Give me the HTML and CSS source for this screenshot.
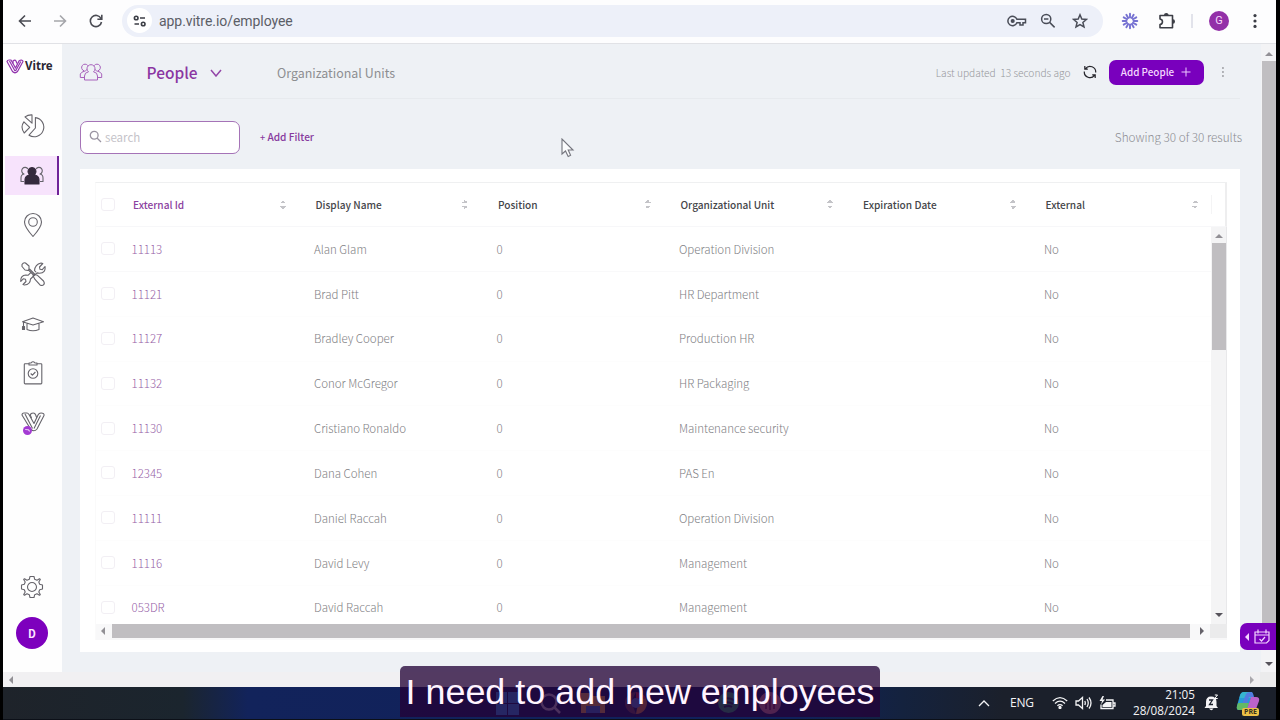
FILE: index.html
```html
<!DOCTYPE html>
<html lang="en">
<head>
<meta charset="utf-8">
<title>Vitre - People</title>
<link rel="stylesheet" href="styles.css">
</head>
<body>
<div class="screen">
  <header class="browser">
    <svg class="nav-icon back" width="14" height="14" viewBox="0 0 14 14"><path d="M13 7H2M7 1.5 1.5 7 7 12.5"/></svg>
    <svg class="nav-icon forward" width="14" height="14" viewBox="0 0 14 14"><path d="M1 7h11M7 1.5 12.500 7 7 12.500"/></svg>
    <svg class="nav-icon reload" width="14" height="14" viewBox="0 0 14 14"><path d="M12 4.500A5.600 5.600 0 1 0 12.500 8M12.800 .8v4.400H8.400"/></svg>
    <div class="address">
      <span class="site-info"><svg width="14" height="12" viewBox="0 0 14 12"><g fill="none" stroke="#3c3e46" stroke-width="1.600"><circle cx="3.200" cy="3" r="1.800"/><path d="M7 3h5M1.500 9H6"/><circle cx="10.200" cy="9" r="1.800"/></g></svg></span>
      <span class="url">app.vitre.io/employee</span>
      <span class="address-tools">
        <svg width="20" height="12" viewBox="0 0 20 12" fill="none" stroke="#4a4d58" stroke-width="1.500"><path d="M9.900 4.200A4.700 4.700 0 1 0 9.900 7.800H13V9.900H16V7.800H18.500V4.200Z"/><circle cx="5.700" cy="6" r="1.300" fill="#4a4d58"/></svg>
        <svg width="16" height="16" viewBox="0 0 16 16" fill="none" stroke="#4a4d58" stroke-width="1.500"><circle cx="6.200" cy="6" r="4.600"/><path d="M9.600 9.400 14.600 14.400M4 6h4.400"/></svg>
        <svg width="16" height="16" viewBox="0 0 16 16" fill="none" stroke="#4a4d58" stroke-width="1.500"><path d="M8 1.800 9.800 6l4.600.4-3.500 3 1.100 4.500L8 11.500 4 13.900l1.100-4.500-3.500-3L6.200 6Z"/></svg>
      </span>
    </div>
    <svg class="burst" width="18" height="18" viewBox="-9 -9 18 18" stroke="#7672d2" stroke-width="1.900" stroke-linecap="round"><path d="M0-3.500V-7.300M0 3.500V7.300M3.500 0H7.300M-3.500 0H-7.300M1.750-3 3.650-6.300M3-1.750 6.300-3.650M3 1.750 6.300 3.650M1.750 3 3.650 6.300M-1.750 3-3.650 6.300M-3 1.750-6.300 3.650M-3-1.750-6.300-3.650M-1.750-3-3.650-6.300"/></svg>
    <svg class="puzzle" width="18" height="18" viewBox="0 0 18 18" fill="none" stroke="#3c3e46" stroke-width="1.600" stroke-linejoin="round"><path d="M2 3.500H14.500V15.800H2V12.500C5.300 12 5.300 7.500 2 7Z"/><path d="M6.800 2.900a1.500 1.200 0 0 1 3 0ZM15 8a1.200 1.500 0 0 1 0 3Z" fill="#3c3e46"/></svg>
    <span class="divider"></span>
    <span class="profile">G</span>
    <svg class="more" width="4" height="16" viewBox="0 0 4 16" fill="#3c3e46"><circle cx="2" cy="2.600" r="1.600"/><circle cx="2" cy="8" r="1.600"/><circle cx="2" cy="13.400" r="1.600"/></svg>
  </header>

  <div class="app">
    <nav class="sidebar">
      <div class="brand">
        <svg width="18" height="15" viewBox="0 0 18 15" fill="none" stroke="#9132ad" stroke-width="1.200" stroke-linejoin="round"><path d="M1 2.500Q1.500 1 3 1h2L9.500 9 13 2Q14 1 15.500 1 17 1.300 17 2.500L11.500 12.500Q9 15 6.500 12.500Z"/><path d="M3.500 2 9 12M7 4.500V2q2-1.800 3 0l1 2.500M14.800 2.500 9.500 12"/></svg>
        <span>Vitre</span>
      </div>
      <a class="item"><svg width="24" height="24" viewBox="0 0 24 24"><path d="M14.400 3.600A9.600 9.600 0 1 1 8 21.200L14.400 14ZM11 9.200 4 2.900Q7 .7 11 .9ZM8.700 13.300 3.200 19Q-1 13 2.900 7.800Z"/></svg></a>
      <a class="item active"><svg width="26" height="22" viewBox="0 0 26 22"><path d="M5 16.500H2V13Q2 9.500 5 9A3.400 3.400 0 1 1 9 4M21 16.500h3V13Q24 9.500 21 9A3.400 3.400 0 1 0 17 4"/><path class="solid" d="M13 2.500a4 4 0 0 1 3 6.700v1q4 .7 4 4.500V19H6v-4.300Q6 10.900 10 10.200v-1A4 4 0 0 1 13 2.500Z"/></svg></a>
      <a class="item"><svg width="24" height="26" viewBox="0 0 24 26"><path d="M12 24.500Q3.500 15 3.500 10A8.500 8.500 0 0 1 20.500 10Q20.500 15 12 24.500Z"/><circle cx="12" cy="10" r="4.300"/></svg></a>
      <a class="item"><svg width="26" height="26" viewBox="0 0 26 26"><path d="M2 3.500Q3.500 1 5.500 2L9 5v3.500L8 9.500 5 9 2 5.500ZM8.500 9l5.500 5.500M9.500 8l5.500 5.500M16 11.200l-1.500-1.700Q15 3.500 21 2l1.800.5L19.500 6l.5 2.300 2.300.4L25 5.500q1 6.500-5.500 6.800l-2.500-.4L10.500 18q-.2 5.500-6 6l-1.500-.5 3-3-.5-2.200-2.300-.5L.8 20.500q-.5-6 5-6.500l2.200.3 3-3"/><path d="M14.500 17.500 13 15l1.500-1.500 3 .8 6 5.700q1.500 2.300.2 3.700t-3.700.2l-5-5.500Z"/></svg></a>
      <a class="item"><svg width="24" height="20" viewBox="0 0 24 20"><path d="M1.500 7.800 12 4 22.500 7.800 12 11ZM6 9.500v6q6 2.500 12 0v-6M2.500 8v7.500M1.500 12.500h2v3h-2Z"/></svg></a>
      <a class="item"><svg width="24" height="26" viewBox="0 0 24 26"><path d="M8 3.800H4Q3.300 3.800 3.300 4.500V23q0 .9.900.9H20q.8 0 .8-.9V4.500Q20.800 3.800 20 3.800H16M8 5V3h2q2-2.500 4 0h2v2Z"/><circle cx="12" cy="13.500" r="4.800"/><path d="m9.700 13.500 1.700 1.700 3-3.200"/></svg></a>
      <a class="item"><svg width="26" height="26" viewBox="0 0 26 26"><path d="M2 5Q2 3 4 3h3q1 0 2 1.500l5 9 4-8.500Q19 3 21 3q3.500 0 3 2.500L17 19q-3 3.500-6.500 0Z"/><path d="m5 4 7.500 14.500M11.500 8 10.200 5q.5-2 3-2Q15 3 15.700 5l1 2.800M20.500 5.500 14 18.500"/><circle cx="7.500" cy="20.500" r="4.500" fill="#a43bd3" stroke="none"/><path d="m5.200 19.500 3 .2 1.500 1.600" stroke="#ead1f7"/></svg></a>
      <a class="item settings"><svg width="26" height="26" viewBox="-13 -13 26 26"><path d="M-2-10.500H2L2.700-7.700 5-6.800 7.500-8.300 8.300-7.500 6.800-5 7.700-2.700 10.500-2V2L7.700 2.700 6.800 5 8.300 7.500 7.500 8.300 5 6.800 2.700 7.700 2 10.500H-2L-2.700 7.700-5 6.800-7.500 8.300-8.300 7.500-6.800 5-7.700 2.700-10.500 2V-2L-7.700-2.700-6.800-5-8.300-7.500-7.500-8.300-5-6.800-2.700-7.700Z"/><circle r="4.500"/></svg></a>
      <div class="avatar">D</div>
    </nav>

    <main class="main">
      <div class="topbar">
        <svg class="people" width="24" height="18" viewBox="0 0 24 18" fill="none" stroke="#a862bc" stroke-width="1" stroke-linejoin="round"><path d="M9.500 8.800A4 4 0 1 1 14.500 8.800Q18.500 9.500 18.500 13V17h-13v-4q0-3.500 4-4.200Z"/><path d="M8 6.500 6.500 7.800Q2 9 1.300 11v3.500H5.500M5 7.800A3.400 3.400 0 1 1 8.800 2.600M16 6.500l1.500 1.300q4.500 1.200 5.200 3.200v3.500H18.500M19 7.800a3.400 3.400 0 1 0-3.800-5.200"/></svg>
        <span class="tab current">People</span>
        <svg class="chevron" width="12" height="8" viewBox="0 0 12 8" fill="none" stroke="#9346a8" stroke-width="1.500"><path d="m1 1 5 6 5-6"/></svg>
        <span class="tab units">Organizational Units</span>
        <span class="updated">Last updated&nbsp; 13 seconds ago</span>
        <svg class="refresh" width="14" height="14" viewBox="0 0 14 14" fill="none" stroke="#25252b" stroke-width="1.200"><path d="M12.700 7.500A5.700 5.700 0 0 0 2.500 3.600M1.300 6.500A5.700 5.700 0 0 0 11.500 10.400M1.800 1V4.200H4.800M12.200 13V9.800H9.200"/></svg>
        <button class="add">Add People <svg width="10" height="10" viewBox="0 0 10 10" stroke="#eec8ff" stroke-width="1"><path d="M5 .5v9M.5 5h9"/></svg></button>
        <svg class="kebab" width="4" height="10" viewBox="0 0 4 10" fill="#85868a"><path d="M1.200 .2h1.500v1.500H1.200ZM1.200 4.200h1.500v1.500H1.200ZM1.200 8.200h1.500v1.500H1.200Z"/></svg>
      </div>

      <div class="filters">
        <label class="search"><svg width="13" height="13" viewBox="0 0 13 13" fill="none" stroke="#9a94a2" stroke-width="1.300"><circle cx="5.200" cy="5.200" r="3.900"/><path d="m8 8 4 4"/></svg><span>search</span></label>
        <span class="add-filter"><i>+</i> Add Filter</span>
        <span class="results">Showing 30 of 30 results</span>
      </div>

      <section class="card">
        <div class="table">
          <div class="row head">
            <span class="check"></span>
            <span class="cell sorted">External Id<i class="sort"></i></span>
            <span class="cell">Display Name<i class="sort"></i></span>
            <span class="cell">Position<i class="sort"></i></span>
            <span class="cell">Organizational Unit<i class="sort"></i></span>
            <span class="cell">Expiration Date<i class="sort"></i></span>
            <span class="cell last">External<i class="sort"></i></span>
          </div>
          <div class="body">
            <div class="rows">
              <div class="row"><span class="check"></span><span class="cell id">11113</span><span class="cell">Alan Glam</span><span class="cell">0</span><span class="cell">Operation Division</span><span class="cell"></span><span class="cell">No</span></div>
              <div class="row"><span class="check"></span><span class="cell id">11121</span><span class="cell">Brad Pitt</span><span class="cell">0</span><span class="cell">HR Department</span><span class="cell"></span><span class="cell">No</span></div>
              <div class="row"><span class="check"></span><span class="cell id">11127</span><span class="cell">Bradley Cooper</span><span class="cell">0</span><span class="cell">Production HR</span><span class="cell"></span><span class="cell">No</span></div>
              <div class="row"><span class="check"></span><span class="cell id">11132</span><span class="cell">Conor McGregor</span><span class="cell">0</span><span class="cell">HR Packaging</span><span class="cell"></span><span class="cell">No</span></div>
              <div class="row"><span class="check"></span><span class="cell id">11130</span><span class="cell">Cristiano Ronaldo</span><span class="cell">0</span><span class="cell">Maintenance security</span><span class="cell"></span><span class="cell">No</span></div>
              <div class="row"><span class="check"></span><span class="cell id">12345</span><span class="cell">Dana Cohen</span><span class="cell">0</span><span class="cell">PAS En</span><span class="cell"></span><span class="cell">No</span></div>
              <div class="row"><span class="check"></span><span class="cell id">11111</span><span class="cell">Daniel Raccah</span><span class="cell">0</span><span class="cell">Operation Division</span><span class="cell"></span><span class="cell">No</span></div>
              <div class="row"><span class="check"></span><span class="cell id">11116</span><span class="cell">David Levy</span><span class="cell">0</span><span class="cell">Management</span><span class="cell"></span><span class="cell">No</span></div>
              <div class="row"><span class="check"></span><span class="cell id">053DR</span><span class="cell">David Raccah</span><span class="cell">0</span><span class="cell">Management</span><span class="cell"></span><span class="cell">No</span></div>
            </div>
            <div class="vscroll"><i class="arrow up"></i><i class="thumb"></i><i class="arrow down"></i></div>
          </div>
          <div class="hscroll"><i class="arrow left"></i><i class="thumb"></i><i class="arrow right"></i><i class="corner"></i></div>
        </div>
      </section>
    </main>

    <div class="page-scroll"><i class="arrow up"></i><i class="thumb"></i><i class="arrow down"></i></div>
    <div class="task-tab"><i class="arrow left"></i><svg width="16" height="15" viewBox="0 0 16 15" fill="none" stroke="#f3d5ff" stroke-width="1.200"><path d="M1 3H15V11.500L12.500 14H1ZM1 6H15M4 .5V4.500M12 .5V4.500M5.500 10l2 2 3.500-4"/></svg></div>
  </div>
  <div class="page-hscroll"><i class="arrow left"></i><i class="arrow right"></i><i class="corner"></i></div>

  <footer class="taskbar">
    <div class="pinned">
      <svg width="23" height="23" viewBox="0 0 23 23" fill="#2f9cf4"><path d="M0 0h11v11H0ZM12 0h11v11H12ZM0 12h11v11H0ZM12 12h11v11H12Z"/></svg>
      <svg width="22" height="22" viewBox="0 0 22 22" fill="none" stroke="#cdc8da" stroke-width="2.500"><circle cx="10" cy="10" r="7.500"/><path d="m15 15 6 6"/></svg>
      <svg width="24" height="21" viewBox="0 0 24 21"><path d="M0 1h9l2 3h13v17H0Z" fill="#f5b34a"/><path d="M5 14h14v7H5Z" fill="#3b7cdb"/></svg>
      <svg width="22" height="22" viewBox="0 0 22 22"><path d="M11 0A11 11 0 0 1 21 6.500H11Z" fill="#d83d48"/><path d="M11 0A11 11 0 0 0 11 22L7 12V8Z" fill="#73515c"/><path d="M11 22A11 11 0 0 0 21 6.500H14Z" fill="#e5913f"/><circle cx="11" cy="11" r="5" fill="#5b8be2"/></svg>
      <svg class="green" width="21" height="21" viewBox="0 0 21 21"><circle cx="10.500" cy="10.500" r="10.500" fill="#2cb576"/><path d="M5 7q6-2 11 1M5 11q6-2 10 1M6 15q5-2 8 0" stroke="#183851" fill="none" stroke-width="2"/></svg>
      <svg width="22" height="22" viewBox="0 0 22 22"><circle cx="11" cy="11" r="11" fill="#e58da0"/><path d="M7 5v12M11 4v14M15 5v12" stroke="#9c3c6e" stroke-width="2"/></svg>
    </div>
    <div class="tray">
      <svg class="caret" width="12" height="8" viewBox="0 0 12 8"><path d="m1 7 5-5 5 5"/></svg>
      <span class="lang">ENG</span>
      <svg class="wifi" width="16" height="13" viewBox="0 0 16 13"><path d="M.8 5Q8-1.800 15.200 5M3 7.400q5-4.500 10 0M5.400 9.800q2.600-2.200 5.200 0"/><circle cx="8" cy="11.500" r="1" fill="#f3f3f5"/></svg>
      <svg class="volume" width="17" height="14" viewBox="0 0 17 14"><path d="M1 5h2.500L7.500 1.500v11L3.500 9H1ZM9.800 5q1 2 0 4M12 3q2.500 4 0 8M14 1.500q4 5.500 0 11"/></svg>
      <svg class="battery" width="17" height="14" viewBox="0 0 17 14"><path d="M7 4h7v8.500H2V8.500M14.500 7H16v3h-1.500"/><path d="M7 6h5.500v5h-9V9ZM3.500 0 .5 5H3L2 8.500 6 3.500H3.500L5 0Z" fill="#f3f3f5" stroke="none"/></svg>
      <div class="clock"><span>21:05</span><span>28/08/2024</span></div>
      <svg class="bell" width="15" height="17" viewBox="0 0 15 17"><path d="M2 12V8Q2 2.500 7 2.500q5.500 0 5.500 5.500v4l1.500 2H.5ZM5 14.500q2.500 3.500 4.500 0Z" fill="#f3f3f5" stroke="none"/><path d="M5 6h3.500L5.500 10.500H9" stroke="#1b202c"/><path d="M10.800 1h2.700l-2.700 3.500h2.900" stroke="#fff" stroke-width="1"/></svg>
      <div class="copilot"><svg width="24" height="24" viewBox="0 0 24 24"><path d="M8 1h7q2 0 1 3l-4 12q-1 3-4 3H3q-3 0-2-4L4 4q1-3 4-3Z" fill="#269bd9"/><path d="M4 5Q5 1 8 1h7q2 0 1 3l-1 3H3.500Z" fill="#36b5ce"/><path d="M2 12h11l-1 4q-1 3-4 3H3q-3 0-2-4Z" fill="#63b965"/><path d="M11 18l4-12h5q4 0 3 4l-3 8q-1 3-4 3H9Z" fill="#bb62c9"/><path d="M15 1q2 0 3 5h-5l-2 6H6.500L10 3q1-2 5-2Z" fill="#527be0"/></svg><b>PRE</b></div>
    </div>
  </footer>
  <div class="caption">I need to add new employees</div>
  <svg class="cursor" width="14" height="20" viewBox="0 0 14 20"><path d="M1 1v15l3.500-3 2.700 5.500 2.400-1.200L7.200 12H12Z" fill="#fbfcfd" stroke="#74757d" stroke-width="1.100"/></svg>
</div>
</body>
</html>
```
FILE: styles.css
```css
* { box-sizing: border-box; }
body { margin: 0; background: #000; font-family: "Noto Sans CJK SC", "Noto Sans", sans-serif; }
svg { display: block; flex: none; }
.screen { position: relative; width: 1280px; height: 720px; overflow: hidden; padding: 0 4px 0 3px; display: flex; flex-direction: column; background: #000; }

.browser { height: 44px; flex: none; background: #fdfdfe; border-bottom: 1px solid #e1e2e6; display: flex; align-items: center; padding: 0 19px 2px 15px; }
.nav-icon { fill: none; stroke: #4a4b53; stroke-width: 1.6; }
.nav-icon.forward { stroke: #a5a6ab; margin-left: 21px; }
.nav-icon.reload { margin-left: 22px; }
.address { width: 981px; height: 32px; margin-left: 19px; border-radius: 16px; background: #edf0f9; display: flex; align-items: center; padding: 0 15px 0 5px; }
.site-info { width: 25px; height: 25px; border-radius: 50%; background: #fff; display: flex; align-items: center; justify-content: center; }
.url { margin-left: 7px; font: 14px Roboto, sans-serif; letter-spacing: -.06px; color: #5c5e67; }
.address-tools { margin-left: auto; display: flex; align-items: center; gap: 14px; }
.address-tools svg:nth-child(2) { margin: 0 2px 0 -2px; }
.address-tools svg:first-child { margin-right: 1px; }
.burst { margin-left: 18px; }
.puzzle { margin-left: 19px; }
.divider { width: 2px; height: 14px; background: #e2e3eb; margin-left: 15px; }
.profile { width: 20px; height: 20px; margin-left: 16px; border-radius: 50%; background: #9330a8; color: #f5d9fa; font: 11px/20px Roboto, sans-serif; text-align: center; }
.more { margin-left: auto; }

.app { position: relative; height: 628px; flex: none; display: flex; background: #eef1f5; }
.sidebar { width: 59px; background: #fefefe; display: flex; flex-direction: column; align-items: center; padding: 12px 1px 0 0; }
.brand { height: 20px; display: flex; align-items: center; gap: 1px; align-self: flex-start; padding-left: 3px; font: bold 11.5px/20px "Noto Sans", sans-serif; color: #2b2733; }
.item { width: 53px; height: 39px; margin-bottom: 10.5px; padding-left: 1px; flex: none; display: flex; align-items: center; justify-content: center; }
.brand + .item { margin-top: 30px; }
.item svg { fill: none; stroke: #66646b; stroke-width: 1.1; stroke-linejoin: round; }
.item.active { width: 54px; background: #f7e3fc; border-right: 2px solid #702399; padding-left: 2px; padding-top: 1px; }
.item .solid { fill: #352a3d; stroke: #352a3d; }
.item.settings { margin-top: 115px; margin-bottom: 10px; padding-left: 0; }
.avatar { width: 32px; height: 32px; flex: none; border-radius: 50%; background: #7d00bd; color: #fde5ff; font-size: 11px; font-weight: 700; line-height: 32px; text-align: center; }

.main { width: 1199px; padding: 0 21px 0 18px; }
.topbar { height: 55px; display: flex; align-items: center; padding-top: 2px; border-bottom: 1px solid #e7eaee; white-space: nowrap; }
.people { margin-left: -1px; }
.tab { line-height: 22px; }
.current { width: 52px; margin-left: 43.5px; font-size: 15.5px; font-weight: 500; color: #8a36a2; }
.chevron { margin-left: 11px; margin-top: 2px; }
.units { margin-left: 55.5px; margin-top: 1px; font-size: 12.45px; color: #8d8e91; }
.updated { margin-left: auto; font-size: 10.2px; font-weight: 300; color: #97989c; }
.refresh { margin-left: 12px; }
.add { width: 95px; height: 25px; margin-left: 12px; padding: 0; border: 0; border-radius: 7px; background: #7900bd; color: #f4d7ff; font: 500 9.9px/23px "Noto Sans CJK SC", sans-serif; display: flex; align-items: center; justify-content: center; gap: 7px; }
.kebab { margin: 0 15.5px 0 17px; }
.filters { height: 70px; display: flex; align-items: center; padding-top: 6px; margin-right: -2px; }
.search { width: 160px; height: 33px; border: 1px solid #a573b7; border-radius: 7px; background: #fff; display: flex; align-items: center; gap: 3px; padding: 0 8px 1px; font-size: 11.5px; line-height: 20px; color: #c5c3c9; }
.add-filter { margin: 1px 0 0 20px; font-size: 10.1px; line-height: 18px; font-weight: 500; color: #873a9e; }
.add-filter i { font-style: normal; font-size: 9px; }
.results { margin: -2px 0 0 auto; font-size: 11.75px; font-weight: 300; color: #8b8c91; }

.card { height: 483px; background: #fff; padding: 13px 13px 12px 15px; }
.table { width: 1132px; border-top: 1px solid #eff0f1; border-left: 1px solid #fafafa; }
.row { height: 44.85px; display: grid; grid-template-columns: 35.5px repeat(6, 182.5px); align-items: center; padding-bottom: .4px; border-bottom: 1px solid #fdfdfd; }
.rows .row:first-child { border-bottom-color: #f9f9fa; }
.row.head { height: 44px; padding-bottom: 0; border-bottom-color: #f7f7f9; border-right: 2px solid #eeeeef; }
.check { width: 14px; height: 13px; margin-left: 5px; border: 1px solid #f2eff4; border-radius: 3px; }
.cell { display: flex; align-items: center; font-size: 11.5px; font-weight: 300; line-height: 20px; color: #7e7e83; white-space: nowrap; }
.rows .cell { letter-spacing: -.02px; }
.cell.id { color: #9560a6; }
.head .cell { font-size: 10.1px; font-weight: 500; line-height: 18px; color: #45464a; padding-left: 1.5px; padding-top: 1px; }
.head .cell.sorted { color: #8b42a0; }
.head .cell.last { border-right: 1px solid #f4f4f5; margin-right: 15px; }
.cell.last .sort { margin-right: 12.5px; }
.sort { width: 6px; height: 9px; margin: -1px 28.5px 0 auto; background: linear-gradient(135deg, transparent 50%, #c4c4c8 50%) 0 0 / 3px 3px no-repeat, linear-gradient(225deg, transparent 50%, #c4c4c8 50%) 3px 0 / 3px 3px no-repeat, linear-gradient(45deg, transparent 50%, #c4c4c8 50%) 0 6px / 3px 3px no-repeat, linear-gradient(315deg, transparent 50%, #c4c4c8 50%) 3px 6px / 3px 3px no-repeat; }
.body { height: 397px; display: flex; overflow: hidden; }
.rows { width: 1115px; overflow: hidden; flex: none; }
.vscroll { width: 16px; background: #f4f4f5; border-right: 1px solid #e8e8ea; display: flex; flex-direction: column; align-items: center; padding: 7px 0 7px; }
.thumb { background: #c0bec1; }
.vscroll .thumb { width: 14px; height: 107px; margin-top: 5px; }
.arrow { width: 0; height: 0; flex: none; border: 4px solid transparent; }
.arrow.up { border-bottom-color: #929095; border-top: 0; }
.arrow.down { border-top-color: #56535b; border-bottom: 0; margin-top: auto; }
.arrow.left { border-right-color: #929095; border-left: 0; }
.arrow.right { border-left-color: #65626a; border-right: 0; }
.hscroll { height: 16px; display: flex; align-items: center; background: #f8f8f9; padding-bottom: 2px; }
.hscroll .arrow.left { margin: 0 7px 0 5px; }
.hscroll .thumb { width: 1078px; height: 14px; }
.hscroll .arrow.right { margin-left: 10px; }
.corner { background: #ebebec; margin-left: auto; align-self: stretch; width: 17px; }

.page-scroll { width: 15px; background: #f3f3f5; display: flex; flex-direction: column; align-items: center; padding: 8px 0 6px; }
.page-scroll .thumb { width: 14px; height: 568px; margin-top: 5px; }
.task-tab { position: absolute; right: 0; top: 579px; width: 36px; height: 27px; border-radius: 7px 0 0 7px; background: #7900bd; display: flex; align-items: center; gap: 5px; padding-left: 5px; }
.task-tab .arrow.left { border-right-color: #f3d5ff; }
.page-hscroll { height: 15px; flex: none; background: #f1f0f2; display: flex; align-items: center; padding-left: 6px; }
.page-hscroll .arrow.right { margin-left: auto; border-left-color: #aaa8ad; }
.page-hscroll .corner { margin-left: 6px; width: 16px; }

.taskbar { height: 33px; flex: none; background: linear-gradient(90deg, #1e232a 0, #1b252e 180px, #12235b 245px, #10205b 790px, #14223e 900px, #1b202b 1000px); border-bottom: 1px solid #0c1018; display: flex; padding-right: 16px; }
.pinned { display: flex; gap: 20px; padding: 5px 0 0 493px; align-items: flex-start; }
.pinned .green { margin-left: 51px; }
.tray { margin-left: auto; display: flex; align-items: center; padding-bottom: 1px; color: #f3f3f5; font-family: "Open Sans", sans-serif; }
.tray svg { fill: none; stroke: #f3f3f5; stroke-width: 1.3; }
.lang { margin: 0 19px 0 20px; font-size: 12px; width: 23px; letter-spacing: -.2px; }
.volume { margin-left: 7px; }
.battery { margin-left: 7px; }
.clock { width: 64px; margin-left: 15px; display: flex; flex-direction: column; align-items: flex-end; font-size: 11.7px; line-height: 15.6px; }
.bell { margin-left: 9px; }
.copilot { margin-left: 17px; position: relative; }
.caret { margin-left: 2px; }
.tray .copilot svg { stroke: none; }
.copilot b { position: absolute; right: 1px; bottom: -1px; padding: 0 2px; border-radius: 2px; background: #edc047; color: #37301e; font-size: 7px; line-height: 8px; }

.caption { position: absolute; left: 400px; top: 666px; width: 480px; height: 51px; border-radius: 5px 5px 0 0; background: rgba(35, 3, 55, .77); color: #fff4ff; font: 35.9px/52px "Liberation Sans", sans-serif; text-align: center; white-space: nowrap; }
.cursor { position: absolute; left: 561px; top: 138px; }
```
